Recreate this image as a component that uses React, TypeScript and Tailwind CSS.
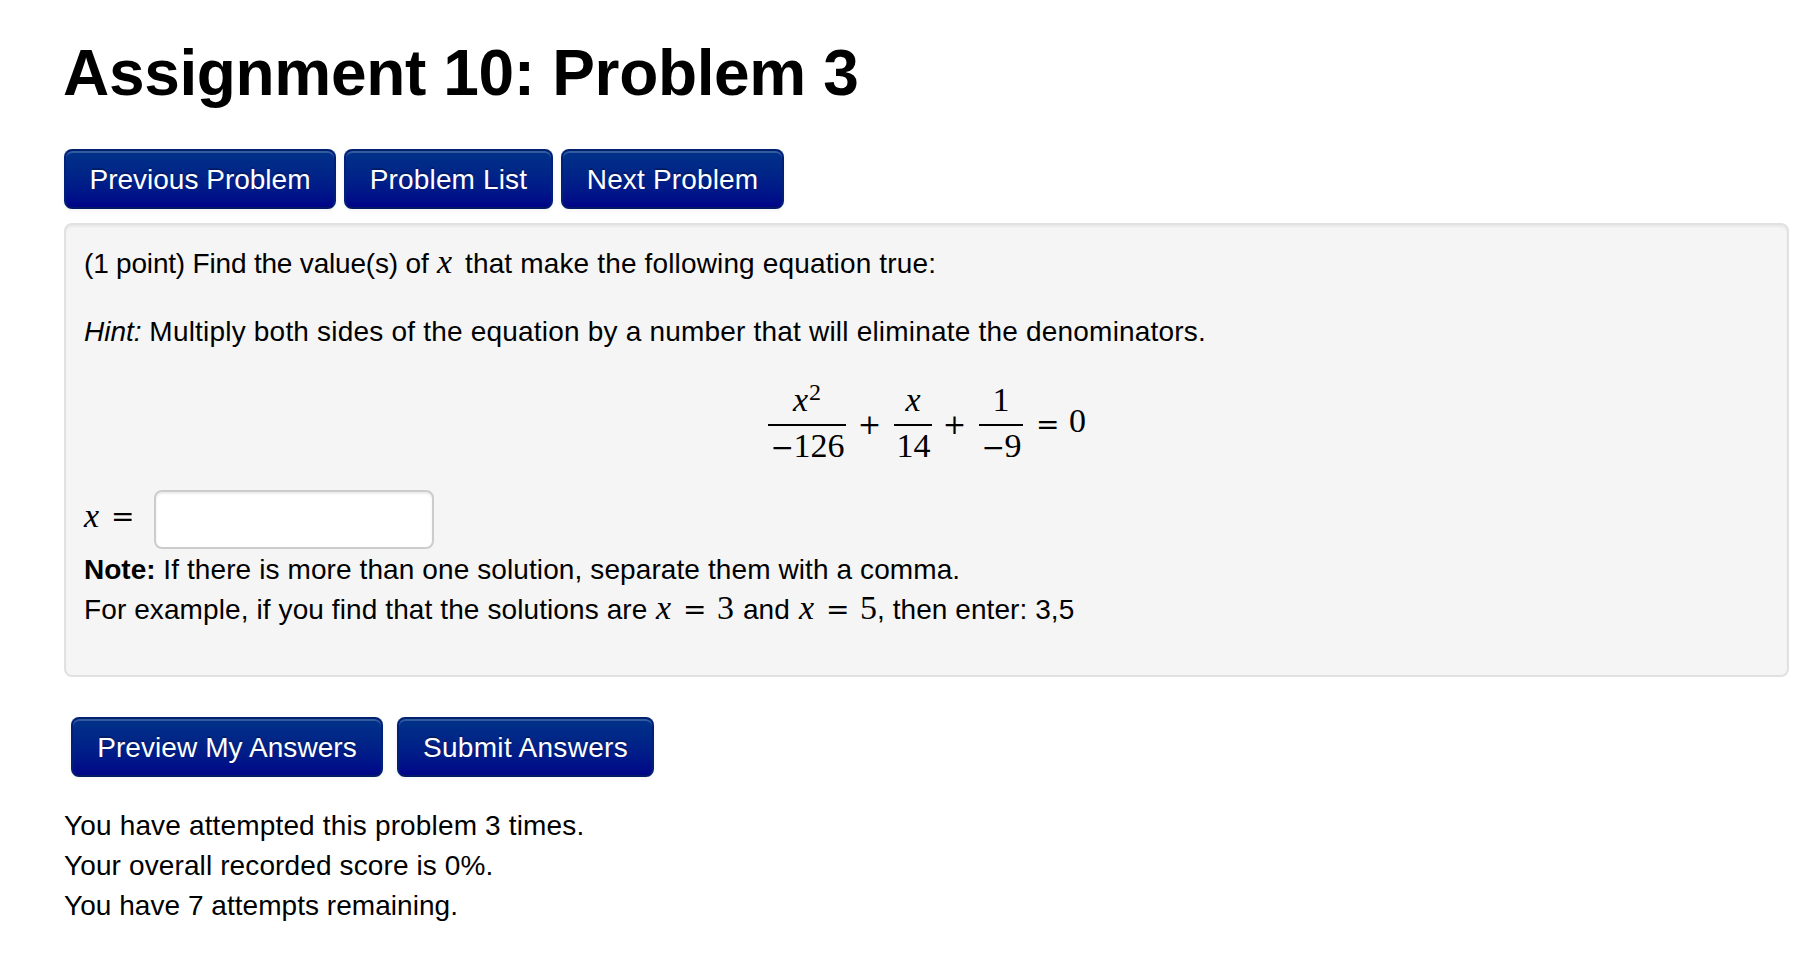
import clsx from "clsx";
import type { ReactNode } from "react";

const navLinks = [
    { label: "Previous Problem", size: "w-[272px]" },
    { label: "Problem List", size: "w-[209px] tracking-[0.15px]" },
    { label: "Next Problem", size: "w-[223px] tracking-[0.15px]" },
];

const actions = [
    { label: "Preview My Answers", size: "w-[312px] tracking-[0.08px]" },
    { label: "Submit Answers", size: "w-[257px] tracking-[0.3px]" },
];

const status = [
    { text: "You have attempted this problem 3 times.", tracking: "tracking-[0.155px]" },
    { text: "Your overall recorded score is 0%.", tracking: "tracking-[0.12px]" },
    { text: "You have 7 attempts remaining.", tracking: "tracking-[0.04px]" },
];

function Button({ label, size }: { label: string; size: string }) {
    return (
        <button
            className={clsx(
                "h-[60px] shrink-0 whitespace-nowrap rounded-[8px] border-2 border-t-[#002070] border-x-[#00207a] border-b-[#001a66] bg-linear-to-b from-[#003388] to-[#000088] bg-origin-border pt-px text-center text-[28px] leading-[40px] text-white shadow-[inset_0_2px_0_rgba(255,255,255,0.2),0_2px_4px_rgba(0,0,0,0.05)] [text-shadow:0_-2px_0_rgba(0,0,0,0.25)]",
                size
            )}
        >
            {label}
        </button>
    );
}

/* Math glyphs */
function Var({ className }: { className?: string }) {
    return (
        <i className={clsx("inline-block font-['Liberation_Serif',serif] text-[34px] leading-none", className)}>
            x
        </i>
    );
}

function Num({ children, className }: { children: ReactNode; className?: string }) {
    return (
        <span className={clsx("inline-block font-['Liberation_Serif',serif] text-[34px] leading-none", className)}>
            {children}
        </span>
    );
}

function Sup({ children }: { children: ReactNode }) {
    return (
        <span className="mb-[13px] ml-px font-['Liberation_Serif',serif] text-[24px] leading-none">
            {children}
        </span>
    );
}

function Op({ children, className }: { children: ReactNode; className?: string }) {
    return (
        <span className={clsx("inline-block font-['DejaVu_Serif',serif] text-[28px] leading-none", className)}>
            {children}
        </span>
    );
}

function Fraction({ top, bottom, className }: { top: ReactNode; bottom: ReactNode; className?: string }) {
    return (
        <div className={clsx("flex flex-col items-center", className)}>
            <div className="flex h-[44px] items-end justify-center whitespace-nowrap pb-[7px] leading-none">
                {top}
            </div>
            <div className="h-[2px] w-full bg-black" />
            <div className="flex h-[40px] items-baseline justify-center whitespace-nowrap pl-px pt-[3px] leading-none">
                {bottom}
            </div>
        </div>
    );
}

export default function App() {
    return (
        <main className="h-[974px] w-[1794px] overflow-hidden bg-white pl-[64px] pr-[5px] pt-[33px] font-['Liberation_Sans',Arial,sans-serif] text-[28px] leading-[40px] text-black">
            <h1 className="-ml-px h-[116px] whitespace-nowrap text-[64px] font-bold leading-[80px] tracking-[-0.34px]">
                Assignment 10: Problem 3
            </h1>

            <nav className="flex gap-[8px]">
                {navLinks.map((link) => (
                    <Button key={link.label} {...link} />
                ))}
            </nav>

            {/* Problem body */}
            <section className="mt-[14px] h-[454px] rounded-[8px] border-2 border-[#e1e1e1] bg-[#f5f5f5] pl-[18px] pt-[19px] shadow-[inset_0_2px_2px_rgba(0,0,0,0.05)]">
                <p className="flex h-[40px] items-baseline whitespace-nowrap">
                    <span className="w-[353px] tracking-[-0.19px]">(1 point) Find the value(s) of</span>
                    <Var className="w-[28px]" />
                    <span className="tracking-[0.15px]">that make the following equation true:</span>
                </p>
                <p className="mt-[28px] h-[40px] whitespace-nowrap">
                    <i>Hint:</i>{" "}
                    <span className="tracking-[0.2px]">
                        Multiply both sides of the equation by a number that will eliminate the denominators.
                    </span>
                </p>

                {/* Equation */}
                <div className="ml-[684px] mt-[28px] flex h-[86px]">
                    <Fraction
                        className="w-[78px]"
                        top={
                            <>
                                <Var />
                                <Sup>2</Sup>
                            </>
                        }
                        bottom={
                            <>
                                <Op className="w-[23px]">−</Op>
                                <Num>126</Num>
                            </>
                        }
                    />
                    <Op className="mt-[31px] w-[47px] text-center">+</Op>
                    <Fraction className="ml-px w-[38px]" top={<Var />} bottom={<Num>14</Num>} />
                    <Op className="mt-[31px] w-[45px] text-center">+</Op>
                    <Fraction
                        className="ml-[2px] w-[44px]"
                        top={<Num>1</Num>}
                        bottom={
                            <>
                                <Op className="w-[23px]">−</Op>
                                <Num>9</Num>
                            </>
                        }
                    />
                    <Op className="ml-[13px] mt-[31px] w-[33px]">=</Op>
                    <Num className="mt-[24px]">0</Num>
                </div>

                <label className="mt-[24px] flex h-[59px] items-start">
                    <Var className="mt-[9px] w-[27px]" />
                    <Op className="mt-[13px] w-[43px]">=</Op>
                    <input className="h-[59px] w-[280px] rounded-[8px] border-2 border-[#cccccc] bg-white shadow-[inset_0_2px_2px_rgba(0,0,0,0.075)] outline-none" />
                </label>

                <p className="mt-px h-[40px] whitespace-nowrap">
                    <b>Note:</b>{" "}
                    <span className="tracking-[0.1px]">
                        If there is more than one solution, separate them with a comma.
                    </span>
                </p>
                <p className="flex h-[40px] items-baseline whitespace-nowrap">
                    <span className="w-[572px] tracking-[0.1px]">
                        For example, if you find that the solutions are
                    </span>
                    <Var className="w-[27px]" />
                    <Op className="w-[34px]">=</Op>
                    <Num className="w-[26px]">3</Num>
                    <span className="w-[56px]">and</span>
                    <Var className="w-[27px]" />
                    <Op className="w-[34px]">=</Op>
                    <Num className="w-[17px]">5</Num>
                    <span className="tracking-[0.07px]">, then enter: 3,5</span>
                </p>
            </section>

            <div className="ml-[7px] mt-[40px] flex gap-[14px]">
                {actions.map((action) => (
                    <Button key={action.label} {...action} />
                ))}
            </div>

            {/* Attempt summary */}
            <div className="mt-[29px]">
                {status.map(({ text, tracking }) => (
                    <p key={text} className={clsx("whitespace-nowrap", tracking)}>
                        {text}
                    </p>
                ))}
            </div>
        </main>
    );
}
